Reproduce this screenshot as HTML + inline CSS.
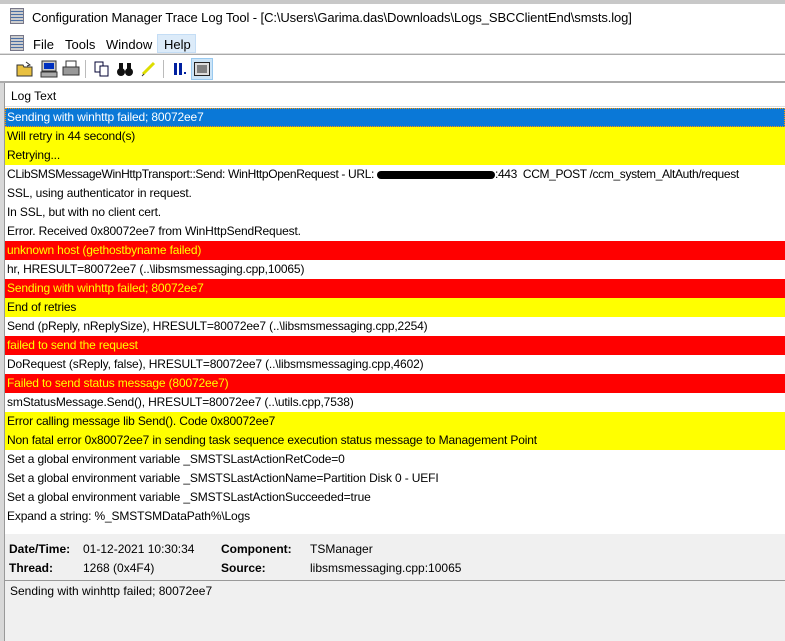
<!DOCTYPE html>
<html><head><style>
*{margin:0;padding:0;box-sizing:border-box}
body{width:785px;height:641px;overflow:hidden;background:#fff;font-family:"Liberation Sans",Tahoma,sans-serif;font-size:12px;color:#000;position:relative}
.abs{position:absolute}
.row{position:absolute;left:5px;right:0;height:19px;line-height:19px;padding-left:2px;white-space:nowrap;letter-spacing:-0.15px}
.y{background:#ffff00}.r{background:#ff0000;color:#ffff00}.b{background:#0a78d7;color:#fff}
.ico{position:absolute;top:60px;width:18px;height:18px}
</style></head><body>
<div class="abs" style="left:0;top:0;width:785px;height:4px;background:#c8c8c8"></div>
<div class="abs" style="left:10px;top:8px;width:14px;height:16px;background:repeating-linear-gradient(#ccc 0 2px,#4a6fa5 2px 3px);border:1px solid #778"></div>
<div class="abs" style="left:32px;top:10px;font-size:13px;letter-spacing:-0.1px">Configuration Manager Trace Log Tool - [C:\Users\Garima.das\Downloads\Logs_SBCClientEnd\smsts.log]</div>
<div class="abs" style="left:10px;top:35px;width:14px;height:16px;background:repeating-linear-gradient(#ccc 0 2px,#4a6fa5 2px 3px);border:1px solid #778"></div>
<div class="abs" style="left:157px;top:34px;width:39px;height:19px;background:#dcebf9;border:1px solid #c4ddf5"></div>
<div class="abs" style="left:33px;top:37px;font-size:13px">File</div>
<div class="abs" style="left:65px;top:37px;font-size:13px">Tools</div>
<div class="abs" style="left:106px;top:37px;font-size:13px">Window</div>
<div class="abs" style="left:164px;top:37px;font-size:13px">Help</div>
<div class="abs" style="left:0;top:53px;width:785px;height:2px;background:#ddd;border-bottom:1px solid #aaa"></div>
<div class="ico" style="left:16px"><svg width="18" height="18"><path d="M1 5h6l1 2h8v9H1z" fill="#e8c040" stroke="#333"/><path d="M10 2l4 3-3 1" stroke="#333" fill="none"/></svg></div>
<div class="ico" style="left:40px"><svg width="18" height="18"><rect x="2" y="1" width="14" height="10" fill="#ccc" stroke="#333"/><rect x="4" y="3" width="10" height="6" fill="#0030c0"/><rect x="1" y="12" width="16" height="5" fill="#aaa" stroke="#333"/></svg></div>
<div class="ico" style="left:62px"><svg width="18" height="18"><rect x="4" y="1" width="10" height="6" fill="#fff" stroke="#333"/><rect x="1" y="7" width="16" height="8" fill="#999" stroke="#333"/></svg></div>
<div class="abs" style="left:85px;top:60px;width:1px;height:18px;background:#bbb"></div>
<div class="ico" style="left:93px"><svg width="18" height="18"><rect x="2" y="2" width="8" height="10" fill="#fff" stroke="#003"/><rect x="7" y="6" width="8" height="10" fill="#fff" stroke="#003"/></svg></div>
<div class="ico" style="left:116px"><svg width="18" height="18"><circle cx="5" cy="12" r="4" fill="#111"/><circle cx="13" cy="12" r="4" fill="#111"/><rect x="3" y="3" width="4" height="7" fill="#111"/><rect x="11" y="3" width="4" height="7" fill="#111"/></svg></div>
<div class="ico" style="left:140px"><svg width="18" height="18"><path d="M3 14L14 3" stroke="#dd0" stroke-width="3"/><path d="M2 16l2-2" stroke="#333"/></svg></div>
<div class="abs" style="left:163px;top:60px;width:1px;height:18px;background:#bbb"></div>
<div class="ico" style="left:172px"><svg width="18" height="18"><rect x="2" y="3" width="3" height="12" fill="#0020a0"/><rect x="7" y="3" width="3" height="12" fill="#0020a0"/><rect x="12" y="12" width="2" height="2" fill="#0020a0"/></svg></div>
<div class="abs" style="left:191px;top:58px;width:22px;height:22px;background:#cce4f7;border:1px solid #99c9ef"></div>
<div class="ico" style="left:193px"><svg width="18" height="18"><rect x="1.5" y="2.5" width="15" height="13" fill="#ddd" stroke="#222"/><path d="M4 6h10M4 8h10M4 10h10M4 12h10" stroke="#222"/></svg></div>
<div class="abs" style="left:0;top:81px;width:785px;height:2px;background:#aaa"></div>
<div class="abs" style="left:0;top:83px;width:5px;height:558px;background:#d8d8d8;border-right:1px solid #999"></div>
<div class="abs" style="left:11px;top:89px">Log Text</div>
<div class="abs" style="left:5px;top:106px;width:780px;height:1px;background:#ddd"></div>
<div class="row b" style="top:108px;outline:1px dotted #f90;outline-offset:-1px">Sending with winhttp failed; 80072ee7</div>
<div class="row y" style="top:127px">Will retry in 44 second(s)</div>
<div class="row y" style="top:146px">Retrying...</div>
<div class="row" style="top:165px;letter-spacing:-0.35px">CLibSMSMessageWinHttpTransport::Send: WinHttpOpenRequest - URL: <span style="display:inline-block;width:118px;height:8px;background:#000;border-radius:4px;vertical-align:middle"></span>:443&nbsp; CCM_POST /ccm_system_AltAuth/request</div>
<div class="row" style="top:184px">SSL, using authenticator in request.</div>
<div class="row" style="top:203px">In SSL, but with no client cert.</div>
<div class="row" style="top:222px">Error. Received 0x80072ee7 from WinHttpSendRequest.</div>
<div class="row r" style="top:241px">unknown host (gethostbyname failed)</div>
<div class="row" style="top:260px">hr, HRESULT=80072ee7 (..\libsmsmessaging.cpp,10065)</div>
<div class="row r" style="top:279px">Sending with winhttp failed; 80072ee7</div>
<div class="row y" style="top:298px">End of retries</div>
<div class="row" style="top:317px">Send (pReply, nReplySize), HRESULT=80072ee7 (..\libsmsmessaging.cpp,2254)</div>
<div class="row r" style="top:336px">failed to send the request</div>
<div class="row" style="top:355px">DoRequest (sReply, false), HRESULT=80072ee7 (..\libsmsmessaging.cpp,4602)</div>
<div class="row r" style="top:374px">Failed to send status message (80072ee7)</div>
<div class="row" style="top:393px">smStatusMessage.Send(), HRESULT=80072ee7 (..\utils.cpp,7538)</div>
<div class="row y" style="top:412px">Error calling message lib Send(). Code 0x80072ee7</div>
<div class="row y" style="top:431px">Non fatal error 0x80072ee7 in sending task sequence execution status message to Management Point</div>
<div class="row" style="top:450px">Set a global environment variable _SMSTSLastActionRetCode=0</div>
<div class="row" style="top:469px">Set a global environment variable _SMSTSLastActionName=Partition Disk 0 - UEFI</div>
<div class="row" style="top:488px">Set a global environment variable _SMSTSLastActionSucceeded=true</div>
<div class="row" style="top:507px">Expand a string: %_SMSTSMDataPath%\Logs</div>
<div class="abs" style="left:5px;top:534px;width:780px;height:107px;background:#f0f0f0"></div>
<div class="abs" style="left:9px;top:542px;font-weight:bold">Date/Time:</div>
<div class="abs" style="left:83px;top:542px">01-12-2021 10:30:34</div>
<div class="abs" style="left:221px;top:542px;font-weight:bold">Component:</div>
<div class="abs" style="left:310px;top:542px">TSManager</div>
<div class="abs" style="left:9px;top:561px;font-weight:bold">Thread:</div>
<div class="abs" style="left:83px;top:561px">1268 (0x4F4)</div>
<div class="abs" style="left:221px;top:561px;font-weight:bold">Source:</div>
<div class="abs" style="left:310px;top:561px">libsmsmessaging.cpp:10065</div>
<div class="abs" style="left:5px;top:580px;width:780px;height:1px;background:#999"></div>
<div class="abs" style="left:10px;top:584px">Sending with winhttp failed; 80072ee7</div>
</body></html>
